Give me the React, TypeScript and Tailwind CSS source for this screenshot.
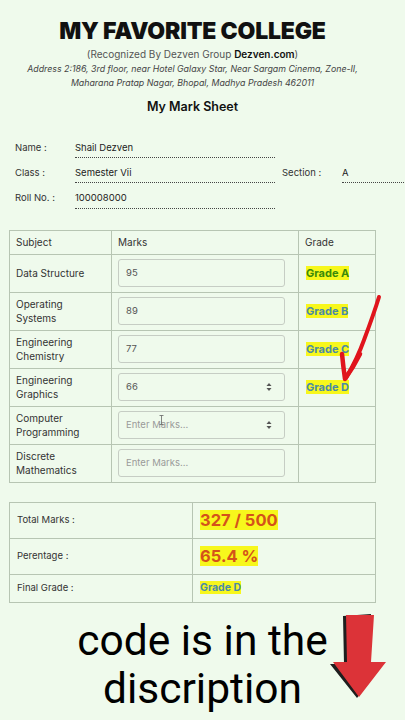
import React from 'react'

const subjects = [
  { name: 'Data Structure', marks: '95', grade: 'Grade A', color: 'text-[#3a8a0a]' },
  { name: 'Operating Systems', marks: '89', grade: 'Grade B', color: 'text-[#4a8aa6]' },
  { name: 'Engineering Chemistry', marks: '77', grade: 'Grade C', color: 'text-[#4a8aa6]' },
  { name: 'Engineering Graphics', marks: '66', grade: 'Grade D', color: 'text-[#4a8aa6]', spin: true },
  { name: 'Computer Programming', marks: '', grade: '', color: '', spin: true, cursor: true },
  { name: 'Discrete Mathematics', marks: '', grade: '', color: '' },
]

function Spinner() {
  return (
    <svg width="6" height="10" viewBox="0 0 6 10" className="absolute right-[12px] top-1/2 -translate-y-1/2">
      <path d="M3 1 L5.5 4 H0.5 Z" fill="#555" />
      <path d="M3 9 L5.5 6 H0.5 Z" fill="#555" />
    </svg>
  )
}

function InfoField({ label, value }: { label: string; value: string }) {
  return (
    <>
      <span className="w-[60px] shrink-0 text-[#333]">{label}</span>
      <span className="w-[200px] shrink-0 border-b border-dotted border-[#444] pb-[2px] text-[#222]">{value}</span>
    </>
  )
}

export default function App() {
  return (
    <div className="relative w-[405px] min-h-[720px] overflow-hidden bg-[#effaec] font-['Inter','Open_Sans',sans-serif]">
      {/* Header */}
      <header className="pr-[20px] pt-[16px] text-center">
        <h1 className="text-[23px] font-black leading-[30px] tracking-[-0.2px] text-[#111]">MY FAVORITE COLLEGE</h1>
        <p className="mt-[1px] text-[10px] leading-[14px] text-[#555]">
          (Recognized By Dezven Group <span className="font-semibold text-[#111]">Dezven.com</span>)
        </p>
        <p className="mt-[1px] px-[14px] text-[8.8px] italic leading-[14px] text-[#444]">
          Address 2:186, 3rd floor, near Hotel Galaxy Star, Near Sargam Cinema, Zone-II, Maharana Pratap Nagar, Bhopal, Madhya Pradesh 462011
        </p>
        <h2 className="mt-[8px] text-[12.5px] font-semibold text-[#111]">My Mark Sheet</h2>
      </header>

      {/* Student info */}
      <section className="mt-[24px] flex flex-col gap-[8px] pl-[15px] text-[9.5px]">
        <div className="flex items-baseline">
          <InfoField label="Name :" value="Shail Dezven" />
        </div>
        <div className="flex items-baseline">
          <InfoField label="Class :" value="Semester Vii" />
          <span className="ml-[7px] w-[60px] shrink-0 text-[#333]">Section :</span>
          <span className="w-[70px] shrink-0 border-b border-dotted border-[#444] pb-[2px] text-[#222]">A</span>
        </div>
        <div className="flex items-baseline">
          <InfoField label="Roll No. :" value="100008000" />
        </div>
      </section>

      {/* Marks table */}
      <table className="ml-[9px] mt-[21px] w-[366px] table-fixed border-collapse text-[10px] text-[#333]">
        <colgroup>
          <col className="w-[102px]" />
          <col className="w-[187px]" />
          <col className="w-[77px]" />
        </colgroup>
        <thead>
          <tr className="h-[24px]">
            <th className="border border-[#b7c5b3] px-[6px] text-left font-normal">Subject</th>
            <th className="border border-[#b7c5b3] px-[6px] text-left font-normal">Marks</th>
            <th className="border border-[#b7c5b3] px-[6px] text-left font-normal">Grade</th>
          </tr>
        </thead>
        <tbody>
          {subjects.map(s => (
            <tr key={s.name} className="h-[38px]">
              <td className="border border-[#b7c5b3] px-[6px] leading-[14px]">
                <div className="max-w-[80px]">{s.name}</div>
              </td>
              <td className="border border-[#b7c5b3] px-[6px]">
                <div className="relative flex h-[28px] w-[167px] items-center rounded-[3px] border border-[#c6cdc4] bg-[#effaec] pl-[7px] text-[9.5px]">
                  {s.marks ? (
                    <span className="text-[#555]">{s.marks}</span>
                  ) : (
                    <span className="text-[#9a9a9a]">Enter Marks...</span>
                  )}
                  {s.spin && <Spinner />}
                  {s.cursor && (
                    <svg width="5" height="10" viewBox="0 0 5 10" className="absolute left-[40px] top-[3px]">
                      <path d="M0.5 0.5 H4.5 M2.5 0.5 V9.5 M0.5 9.5 H4.5" stroke="#666" strokeWidth="0.8" fill="none" />
                    </svg>
                  )}
                </div>
              </td>
              <td className="border border-[#b7c5b3] px-[7px]">
                {s.grade && <span className={`bg-[#f7f71c] text-[11px] font-bold ${s.color}`}>{s.grade}</span>}
              </td>
            </tr>
          ))}
        </tbody>
      </table>

      {/* Summary table */}
      <table className="ml-[9px] mt-[19px] w-[366px] table-fixed border-collapse text-[9.5px] text-[#333]">
        <colgroup>
          <col className="w-[183px]" />
          <col className="w-[183px]" />
        </colgroup>
        <tbody>
          <tr className="h-[36px]">
            <td className="border border-[#b7c5b3] px-[7px]">Total Marks :</td>
            <td className="border border-[#b7c5b3] px-[7px]">
              <span className="bg-[#f7f71c] text-[16.5px] font-bold text-[#d4521a]">327 / 500</span>
            </td>
          </tr>
          <tr className="h-[36px]">
            <td className="border border-[#b7c5b3] px-[7px]">Perentage :</td>
            <td className="border border-[#b7c5b3] px-[7px]">
              <span className="bg-[#f7f71c] text-[16.5px] font-bold text-[#d4521a]">65.4 %</span>
            </td>
          </tr>
          <tr className="h-[28px]">
            <td className="border border-[#b7c5b3] px-[7px]">Final Grade :</td>
            <td className="border border-[#b7c5b3] px-[7px]">
              <span className="bg-[#f7f71c] text-[10.5px] font-bold text-[#4a8aa6]">Grade D</span>
            </td>
          </tr>
        </tbody>
      </table>

      {/* Caption */}
      <div className="mt-[14px] text-center font-['Roboto',sans-serif] text-[42.5px] leading-[48px] text-black">
        <p>code is in the</p>
        <p>discription</p>
      </div>

      {/* Big red arrow */}
      <svg width="60" height="92" viewBox="0 0 60 92" className="absolute left-[330px] top-[612px]">
        <path d="M13 4 L41 2 L38 50 L55 50 L27 86 L0 52 L14 52 Z" fill="#1e1e1e" />
        <path d="M16 3 L44 3 L41 50 L56 50 L29 85 L3 50 L17 50 Z" fill="#dc3338" />
      </svg>

      {/* Hand-drawn arrow */}
      <svg width="60" height="110" viewBox="0 0 60 110" className="absolute left-[335px] top-[292px]">
        <path d="M44 5 C40 18 35 32 29 48 C24 62 18 74 11 86" stroke="#e0141c" strokeWidth="4" fill="none" strokeLinecap="round" />
        <path d="M7 62 C8 72 9 80 10 87 C15 80 20 72 25 62" stroke="#e0141c" strokeWidth="4.5" fill="none" strokeLinecap="round" strokeLinejoin="round" />
      </svg>
    </div>
  )
}
